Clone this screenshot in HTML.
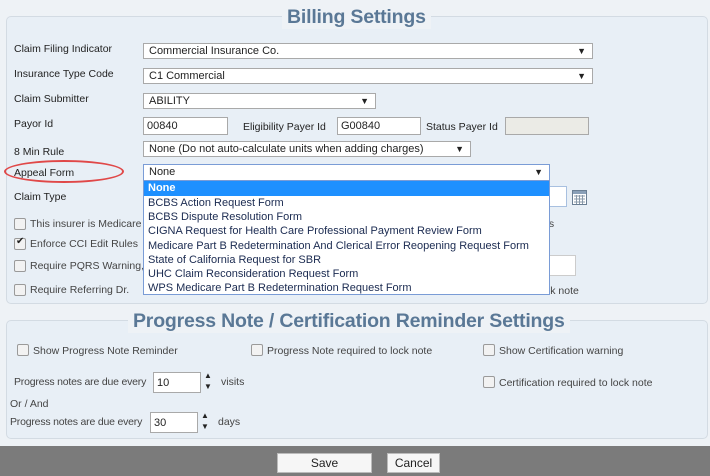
<!DOCTYPE html>
<html><head><style>
*{box-sizing:border-box;margin:0;padding:0}
body{width:710px;height:476px;background:#eef2f6;font-family:"Liberation Sans",sans-serif;font-size:10.5px;color:#222;position:relative;overflow:hidden}
.a{position:absolute;white-space:nowrap}
.panel{position:absolute;border:1px solid #d3dbe3;border-radius:5px;background:#e8eff6}
.title{position:absolute;font-size:19.5px;color:#5a7896;font-weight:bold;background:#eef2f6;padding:0 5px;letter-spacing:-0.2px}
.sel{position:absolute;border:1px solid #a9a9a9;background:#fff;height:16px;padding:1px 5px;font-size:11px;line-height:13px}
.sel:after{content:"▼";position:absolute;right:6px;top:1px;font-size:9px}
.inp{position:absolute;border:1px solid #a9a9a9;background:#fff;height:18px;padding:2px 3px;font-size:11px}
.cb{position:absolute;width:12px;height:12px;border:1px solid #9a9a9a;border-radius:2px;background:#f2f2f2}
.btn{position:absolute;background:#f6f6f6;border:1px solid #bbb;height:20px;text-align:center;font-size:12px;line-height:18px}
</style></head><body>
<div class="panel" style="left:6px;top:16px;width:702px;height:288px"></div>
<div class="title" style="left:282px;top:6px">Billing Settings</div>

<div class="a" style="left:14px;top:43px">Claim Filing Indicator</div>
<div class="sel" style="left:143px;top:43px;width:450px">Commercial Insurance Co.</div>
<div class="a" style="left:14px;top:68px">Insurance Type Code</div>
<div class="sel" style="left:143px;top:68px;width:450px">C1 Commercial</div>
<div class="a" style="left:14px;top:93px">Claim Submitter</div>
<div class="sel" style="left:143px;top:93px;width:233px">ABILITY</div>
<div class="a" style="left:14px;top:118px">Payor Id</div>
<div class="inp" style="left:143px;top:117px;width:85px">00840</div>
<div class="a" style="left:243px;top:121px">Eligibility Payer Id</div>
<div class="inp" style="left:337px;top:117px;width:84px">G00840</div>
<div class="a" style="left:426px;top:121px">Status Payer Id</div>
<div class="inp" style="left:505px;top:117px;width:84px;background:#ebebe6"></div>
<div class="a" style="left:14px;top:146px">8 Min Rule</div>
<div class="sel" style="left:143px;top:141px;width:328px">None (Do not auto-calculate units when adding charges)</div>
<div class="a" style="left:14px;top:167px">Appeal Form</div>
<div class="a" style="left:4px;top:160px;width:120px;height:23px;border:2px solid #e04848;border-radius:50%"></div>
<div class="sel" style="left:143px;top:164px;width:407px;height:17px;border-color:#7a9cd6">None</div>

<div class="a" style="left:14px;top:191px">Claim Type</div>
<div class="inp" style="left:530px;top:186px;width:37px;height:21px;border-color:#a8c0e0"></div>
<svg class="a" style="left:572px;top:190px" width="15" height="15"><rect x="0.5" y="0.5" width="14" height="14" fill="#fff" stroke="#6b7f94"/><rect x="1" y="1" width="13" height="3" fill="#8aa0b8"/><path d="M2 6h11M2 9h11M2 12h11M4.5 5v9M7.5 5v9M10.5 5v9" stroke="#8a9aaa"/></svg>
<div class="cb" style="left:14px;top:218px"></div><div class="a" style="left:30px;top:218px;color:#444">This insurer is Medicare</div>
<div class="a" style="left:543px;top:218px;color:#444">ns</div>
<div class="cb" style="left:14px;top:238px"></div><div class="a" style="left:16px;top:236px;font-size:10px">✔</div><div class="a" style="left:30px;top:238px;color:#444">Enforce CCI Edit Rules</div>
<div class="cb" style="left:14px;top:260px"></div><div class="a" style="left:30px;top:260px;color:#444">Require PQRS Warning,</div>
<div class="inp" style="left:548px;top:255px;width:28px;height:21px;border-color:#ccc"></div>
<div class="cb" style="left:14px;top:284px"></div><div class="a" style="left:30px;top:284px;color:#444">Require Referring Dr.</div>
<div class="a" style="left:545px;top:285px;color:#444">ck note</div>

<div class="a" style="left:143px;top:180px;width:407px;height:115px;background:#fff;border:1px solid #7a9cd6;font-size:11px;line-height:14.2px">
<div style="background:#1e90ff;color:#fff;padding-left:4px;height:15px;font-weight:bold">None</div>
<div style="padding-left:4px;color:#1a2a50">BCBS Action Request Form<br>BCBS Dispute Resolution Form<br>CIGNA Request for Health Care Professional Payment Review Form<br>Medicare Part B Redetermination And Clerical Error Reopening Request Form<br>State of California Request for SBR<br>UHC Claim Reconsideration Request Form<br>WPS Medicare Part B Redetermination Request Form</div>
</div>

<div class="panel" style="left:6px;top:320px;width:702px;height:119px"></div>
<div class="title" style="left:128px;top:310px">Progress Note / Certification Reminder Settings</div>
<div class="cb" style="left:17px;top:344px"></div><div class="a" style="left:33px;top:345px;color:#444">Show Progress Note Reminder</div>
<div class="cb" style="left:251px;top:344px"></div><div class="a" style="left:267px;top:345px;color:#444">Progress Note required to lock note</div>
<div class="cb" style="left:483px;top:344px"></div><div class="a" style="left:499px;top:345px;color:#444">Show Certification warning</div>
<div class="cb" style="left:483px;top:376px"></div><div class="a" style="left:499px;top:377px;color:#444">Certification required to lock note</div>
<div class="a" style="left:14px;top:376px;color:#444;letter-spacing:-0.2px">Progress notes are due every</div>
<div class="inp" style="left:153px;top:372px;width:48px;height:21px;padding-top:4px">10</div>
<div class="a" style="left:204px;top:370px;font-size:8px;line-height:11px">▲<br>▼</div>
<div class="a" style="left:221px;top:376px;color:#444">visits</div>
<div class="a" style="left:10px;top:398px;color:#444">Or / And</div>
<div class="a" style="left:10px;top:416px;color:#444;letter-spacing:-0.2px">Progress notes are due every</div>
<div class="inp" style="left:150px;top:412px;width:48px;height:21px;padding-top:4px">30</div>
<div class="a" style="left:201px;top:410px;font-size:8px;line-height:11px">▲<br>▼</div>
<div class="a" style="left:218px;top:416px;color:#444">days</div>

<div class="a" style="left:0;top:446px;width:710px;height:30px;background:#7b7b7b"></div>
<div class="btn" style="left:277px;top:453px;width:95px">Save</div>
<div class="btn" style="left:387px;top:453px;width:53px">Cancel</div>
</body></html>
